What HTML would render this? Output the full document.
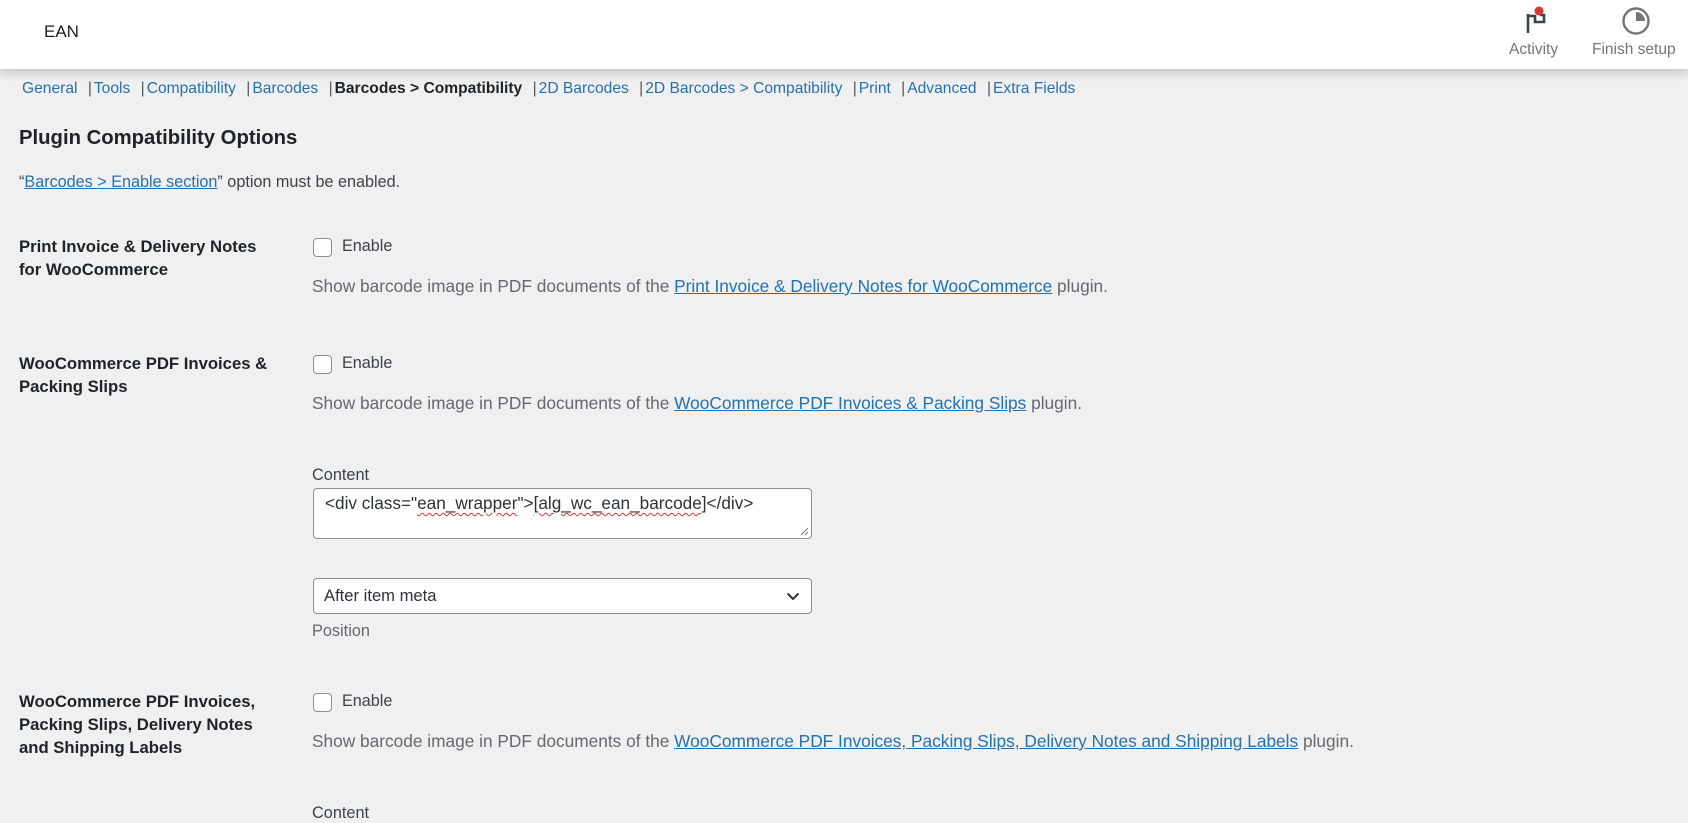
<!DOCTYPE html>
<html><head><meta charset="utf-8">
<style>
*{box-sizing:border-box;margin:0;padding:0}
body{width:1688px;height:823px;overflow:hidden;background:#f0f0f1;font-family:"Liberation Sans",sans-serif;color:#1d2327;position:relative}
.hdr{position:absolute;left:0;top:0;width:1688px;height:69px;background:#fff;box-shadow:0 4px 10px rgba(0,0,0,.18);z-index:2}
.ean{position:absolute;left:44px;top:22px;font-size:17px;color:#1e1e1e}
.hi{position:absolute;top:0;text-align:center;font-size:15.5px;color:#757575}
.hi svg{position:absolute;top:7px}
.hi span{position:absolute;top:41px;white-space:nowrap}
.nav{position:absolute;left:22px;top:80px;font-size:15.6px;color:#2271b1;white-space:nowrap}
.nav b{color:#1d2327}
.nav i{font-style:normal;color:#50575e;margin:0 2px 0 6px}
h2{position:absolute;left:19px;top:127px;font-size:20.3px;font-weight:bold;color:#1d2327}
.note{position:absolute;left:19px;top:173px;font-size:16.2px;color:#3c434a}
a{color:#2271b1;text-decoration:underline}
.lbl{position:absolute;left:19px;font-size:16.7px;font-weight:bold;line-height:23px;color:#1d2327}
.cb{position:absolute;left:313px;width:19px;height:19px;border:1px solid #8c8f94;border-radius:4px;background:#fff}
.en{position:absolute;left:342px;font-size:16.2px;color:#3c434a}
.desc{position:absolute;left:312px;font-size:17.3px;color:#646970;white-space:nowrap}
.ct{position:absolute;left:312px;font-size:16.3px;color:#3c434a}
.ta{position:absolute;left:313px;top:488px;width:499px;height:51px;background:#fff;border:1px solid #8c8f94;border-radius:4px;padding:4px 11px;font-size:17.2px;color:#2c3338}
.sq{text-decoration:underline wavy #d63638;text-decoration-thickness:1px;text-underline-offset:3px}
.sel{position:absolute;left:313px;top:578px;width:499px;height:36px;background:#fff;border:1px solid #8c8f94;border-radius:4px;padding:7px 10px;font-size:16.6px;color:#2c3338}
</style></head><body>
<div class="hdr">
<div class="ean">EAN</div>
<div class="hi" style="left:1500px;width:72px">
<svg style="left:22px;top:5px" width="28" height="30" viewBox="0 0 28 30"><path d="M6 9v19M6 11h7v6h9V10h-4" fill="none" stroke="#3c434a" stroke-width="2.6"/><circle cx="17" cy="6" r="4.5" fill="#d63638"/></svg>
<span style="left:9px">Activity</span></div>
<div class="hi" style="left:1590px;width:94px">
<svg style="left:31px;top:6px" width="30" height="30" viewBox="0 0 30 30"><circle cx="15" cy="15" r="12.5" fill="none" stroke="#757575" stroke-width="2.4"/><path d="M15 6a9 9 0 0 1 9 9h-9z" fill="#757575"/></svg>
<span style="left:2px">Finish setup</span></div>
</div>
<div class="nav">General <i>|</i>Tools <i>|</i>Compatibility <i>|</i>Barcodes <i>|</i><b>Barcodes &gt; Compatibility</b> <i>|</i>2D Barcodes <i>|</i>2D Barcodes &gt; Compatibility <i>|</i>Print <i>|</i>Advanced <i>|</i>Extra Fields</div>
<h2>Plugin Compatibility Options</h2>
<div class="note">“<a>Barcodes &gt; Enable section</a>” option must be enabled.</div>

<div class="lbl" style="top:235px">Print Invoice &amp; Delivery Notes<br>for WooCommerce</div>
<div class="cb" style="top:238px"></div><div class="en" style="top:237px">Enable</div>
<div class="desc" style="top:276px">Show barcode image in PDF documents of the <a>Print Invoice &amp; Delivery Notes for WooCommerce</a> plugin.</div>

<div class="lbl" style="top:352px">WooCommerce PDF Invoices &amp;<br>Packing Slips</div>
<div class="cb" style="top:355px"></div><div class="en" style="top:354px">Enable</div>
<div class="desc" style="top:393px">Show barcode image in PDF documents of the <a>WooCommerce PDF Invoices &amp; Packing Slips</a> plugin.</div>
<div class="ct" style="top:466px">Content</div>
<div class="ta">&lt;div class="<span class="sq">ean_wrapper</span>"&gt;<span class="sq">[alg_wc_ean_barcode]</span>&lt;/div&gt;
<svg style="position:absolute;right:2px;bottom:2px" width="9" height="9"><path d="M8 1L1 8M8 5L5 8" stroke="#777" stroke-width="1"/></svg></div>
<div class="sel">After item meta<svg style="position:absolute;right:11px;top:13px" width="14" height="9" viewBox="0 0 14 9"><path d="M1.5 1.5L7 7l5.5-5.5" fill="none" stroke="#2c3338" stroke-width="2"/></svg></div>
<div class="ct" style="top:622px;color:#646970">Position</div>

<div class="lbl" style="top:690px">WooCommerce PDF Invoices,<br>Packing Slips, Delivery Notes<br>and Shipping Labels</div>
<div class="cb" style="top:693px"></div><div class="en" style="top:692px">Enable</div>
<div class="desc" style="top:731px">Show barcode image in PDF documents of the <a>WooCommerce PDF Invoices, Packing Slips, Delivery Notes and Shipping Labels</a> plugin.</div>
<div class="ct" style="top:804px">Content</div>
</body></html>
